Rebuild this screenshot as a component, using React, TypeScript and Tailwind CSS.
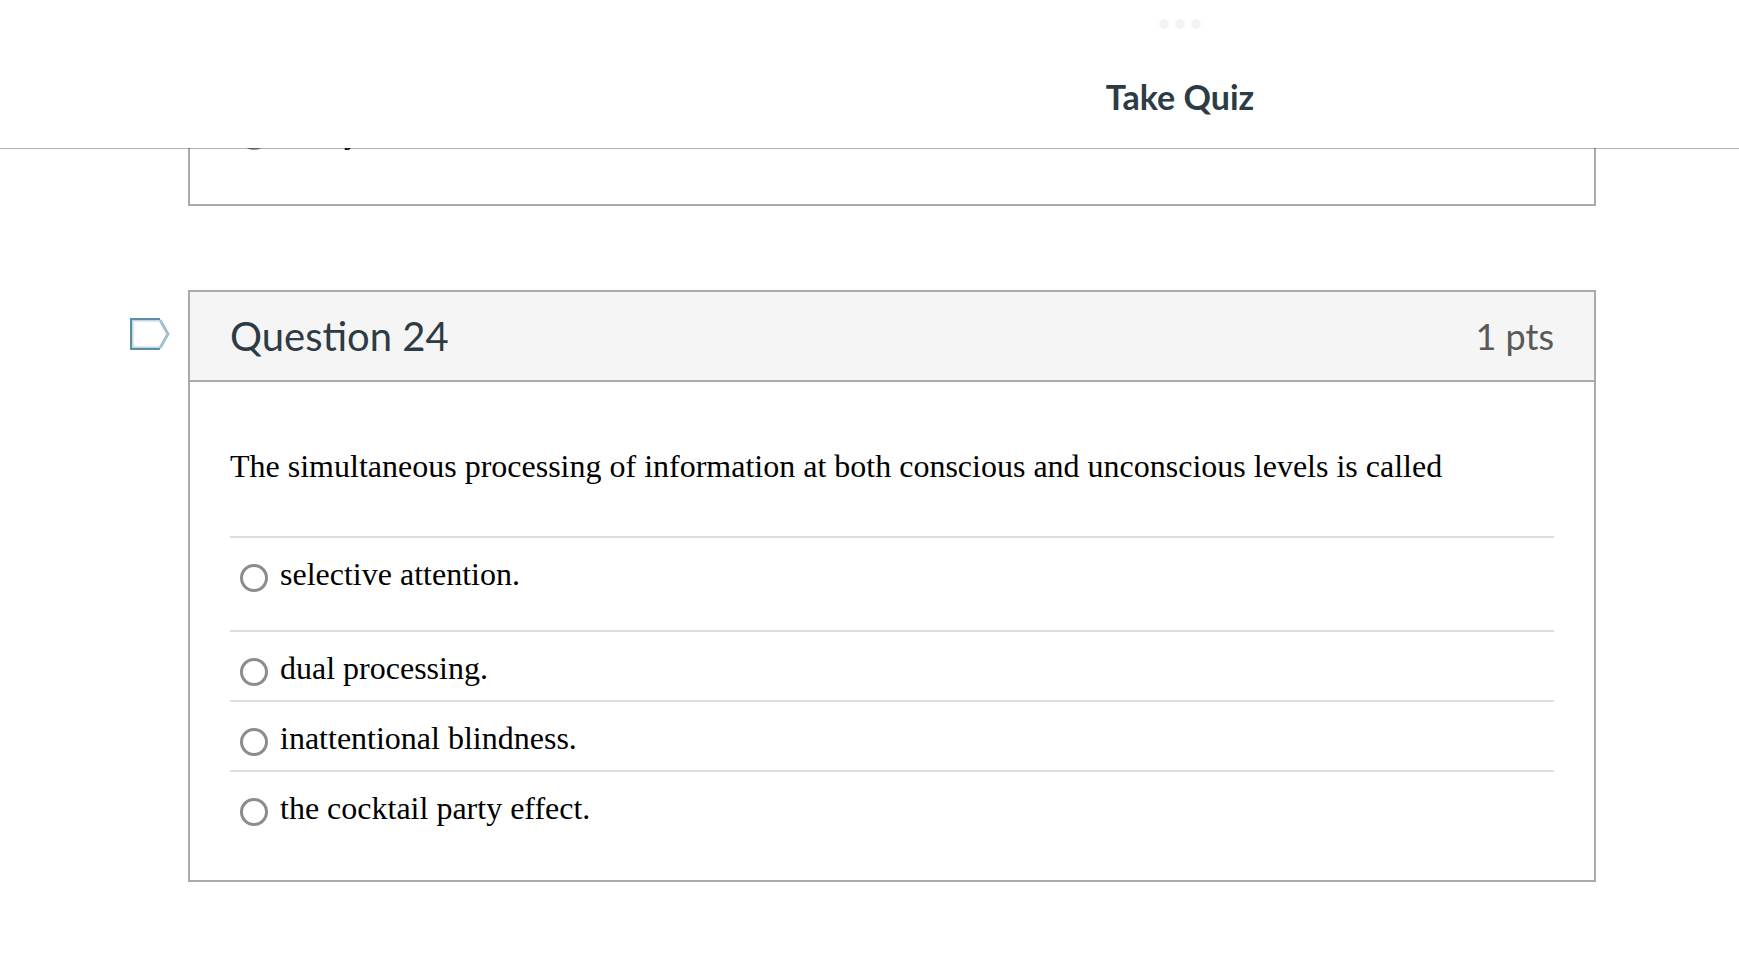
type AnswerProps = {
  group: string;
  text: string;
  className?: string;
};

function Answer({ group, text, className = "pb-3" }: AnswerProps) {
  return (
    <li className={`border-t-2 border-[#dddddd] pt-4 ${className}`}>
      <label className="flex items-start gap-3 pl-[10px]">
        <input
          type="radio"
          name={group}
          className="mt-[10px] size-7 shrink-0 appearance-none rounded-full border-3 border-[#8b8b90] bg-white checked:border-8 checked:border-[#0374b5]"
        />
        <span>{text}</span>
      </label>
    </li>
  );
}

function FlagButton() {
  return (
    <button type="button" aria-label="Flag question" className="mt-7 h-8 w-10 shrink-0">
      <svg viewBox="0 0 40 32" className="h-8 w-10" fill="none">
        <path d="M30 2 L38 16 L30 30" stroke="#a3c0d0" strokeWidth="3" />
        <path d="M30 2 H2 V30 H30" stroke="#c3d6e1" strokeWidth="3" />
        <path d="M30 1 H1 V31 H30" stroke="#5c8dab" strokeWidth="2" />
      </svg>
    </button>
  );
}

export default function App() {
  return (
    <div className="min-h-screen bg-white font-['Liberation_Serif',serif] text-[32px] leading-10 text-black">
      <header className="sticky top-0 z-10 flex h-[149px] flex-col items-center border-b border-black/30 bg-white bg-clip-padding pt-[19px] pl-[621px] font-[Lato,sans-serif]">
        <div className="flex gap-[6px]">
          <span className="size-[10px] rounded-full bg-[#f4f4f6]" />
          <span className="size-[10px] rounded-full bg-[#f4f4f6]" />
          <span className="size-[10px] rounded-full bg-[#f4f4f6]" />
        </div>
        <h1 className="mt-12 text-[34px] leading-10 font-bold text-[#2d3b45]">Take Quiz</h1>
      </header>

      <main className="-mt-[55px] pr-[143px] pb-[78px] pl-[130px]">
        {/* end of the previous question, scrolled under the header */}
        <section aria-label="Question 23" className="ml-[58px] border-x-2 border-b-2 border-[#aaaaaa] px-10">
          <ul>
            <Answer group="question-23" text="vanity." className="pb-[52px]" />
          </ul>
        </section>

        <div className="mt-[84px] flex items-start gap-[18px]">
          <FlagButton />
          <section className="min-w-0 flex-1 border-2 border-[#aaaaaa]">
            <div className="flex h-[90px] items-center justify-between border-b-2 border-[#aaaaaa] bg-[#f5f5f5] px-10 font-[Lato,sans-serif]">
              <h2 className="text-[40px] text-[#2d3b45]">Question 24</h2>
              <span className="text-[36px] text-[#595959]">1 pts</span>
            </div>
            <div className="px-10 pt-16">
              <p className="pb-[50px]">
                The simultaneous processing of information at both conscious and unconscious levels is called
              </p>
              <ul>
                <Answer group="question-24" text="selective attention." className="pb-9" />
                <Answer group="question-24" text="dual processing." />
                <Answer group="question-24" text="inattentional blindness." />
                <Answer group="question-24" text="the cocktail party effect." className="pb-[52px]" />
              </ul>
            </div>
          </section>
        </div>
      </main>
    </div>
  );
}
